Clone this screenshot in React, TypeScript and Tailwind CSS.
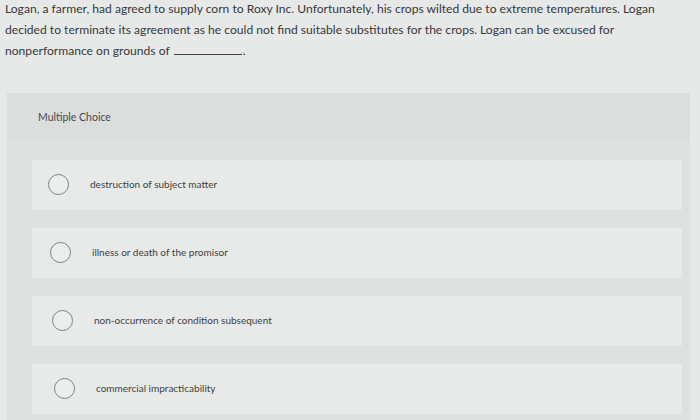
const options = [
  "destruction of subject matter",
  "illness or death of the promisor",
  "non-occurrence of condition subsequent",
  "commercial impracticability",
];

export default function App() {
  return (
    <div
      className="w-[700px] h-[420px] overflow-hidden bg-[#e7e9e8] text-[#3a3c3e]"
      style={{ fontFamily: "Lato, 'Open Sans', sans-serif" }}
    >
      {/* Question */}
      <p className="pl-[5px] pt-0 -mt-[2px] text-[12.1px] leading-[21px] text-[#35373a] whitespace-nowrap">
        Logan, a farmer, had agreed to supply corn to Roxy Inc. Unfortunately, his crops wilted due to extreme temperatures. Logan
        <br />
        decided to terminate its agreement as he could not find suitable substitutes for the crops. Logan can be excused for
        <br />
        nonperformance on grounds of
        <span className="inline-block w-[68px] ml-[4px] mr-[1px] border-b border-[#444] align-baseline" />.
      </p>

      {/* Multiple choice panel */}
      <div className="ml-[7px] mr-[10px] mt-[32px] h-[340px] bg-[#dfe1e0]">
        <div className="pl-[31px] pt-[17px] pb-[13px] text-[10.5px] text-[#46484b] bg-[#dcdedd]">
          Multiple Choice
        </div>
        <div className="flex flex-col gap-[18px] pl-[25px] pr-[8px] pt-[21px]">
          {options.map((o, i) => (
            <div key={i} className="flex items-center h-[50px] bg-[#e8eae9]">
              <span
                className="w-[21px] h-[21px] rounded-full border-[1.5px] border-[#7d7f81] bg-[#eceeed] shrink-0"
                style={{ marginLeft: 16 + i * 2 }}
              />
              <span className="ml-[21px] text-[10px] text-[#3c3e41]">{o}</span>
            </div>
          ))}
        </div>
      </div>
    </div>
  );
}
